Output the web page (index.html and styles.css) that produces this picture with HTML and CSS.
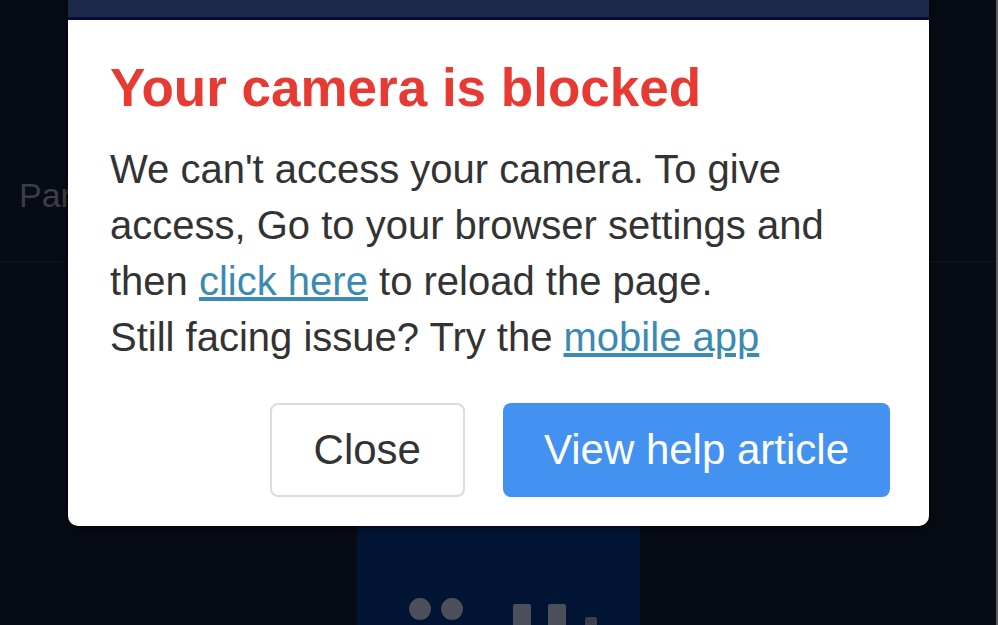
FILE: index.html
```html
<!DOCTYPE html>
<html lang="en">
<head>
  <meta charset="UTF-8" />
  <title>Camera blocked</title>
  <meta name="viewport" content="width=device-width, initial-scale=1.0"/>
  <link rel="stylesheet" href="styles.css">
</head>
<body>
  <!-- 背景：会议界面 -->
  <div class="stage">
    <div class="side-row">
      <span class="side-label">Participants</span>
    </div>
    <div class="tile">
      <svg class="tile-icons" viewBox="0 0 283 100" xmlns="http://www.w3.org/2000/svg">
        <circle cx="63" cy="84" r="11" fill="#4b4f5a"/>
        <circle cx="95" cy="84" r="11" fill="#4b4f5a"/>
        <rect x="156" y="79" width="18" height="30" rx="2" fill="#4b4f5a"/>
        <rect x="191" y="79" width="18" height="30" rx="2" fill="#4b4f5a"/>
        <rect x="228" y="92" width="12" height="20" rx="2" fill="#3a3f4b"/>
      </svg>
    </div>
  </div>

  <!-- 弹窗 -->
  <div class="modal">
    <div class="modal-head"></div>
    <div class="modal-body">
      <h1 class="modal-title">Your camera is blocked</h1>
      <p class="modal-text">
        We can't access your camera. To give access, Go to your browser settings and
        then <a href="#">click here</a> to reload the page.<br>
        Still facing issue? Try the <a href="#">mobile app</a>
      </p>
      <div class="modal-actions">
        <button class="btn btn-close">Close</button>
        <button class="btn btn-primary">View help article</button>
      </div>
    </div>
  </div>
</body>
</html>
```

FILE: styles.css
```css
body {
  margin: 0;
  padding: 0;
  background: #070b14;
  font-family: "Liberation Sans", Arial, sans-serif;
  overflow: hidden;
  height: 625px;
}

/* ======================
   背景
   ====================== */
.stage {
  height: 625px;
  border-right: 2px solid #5a5d63;
  box-sizing: border-box;
  display: flex;
  flex-direction: column;
}
.side-row {
  height: 262px;
  border-bottom: 1px solid #0f1522;
  padding: 176px 0 0 19px;
  box-sizing: border-box;
}
.side-label {
  display: block;
  width: 49px;
  overflow: hidden;
  white-space: nowrap;
  font-size: 34px;
  color: #3b3e46;
}
.tile {
  flex: 1;
  width: 283px;
  margin-left: 357px;
  background: #021433;
  display: flex;
  align-items: flex-end;
}
.tile-icons {
  width: 283px;
  height: 100px;
  display: block;
}

/* ======================
   弹窗
   ====================== */
.modal {
  position: absolute;
  top: 0;
  left: 68px;
  width: 861px;
  height: 526px;
  background: #fff;
  border-radius: 0 0 10px 10px;
  box-shadow: 0 2px 6px rgba(0,0,0,0.6);
  overflow: hidden;
}
.modal-head {
  height: 17px;
  background: #1c294b;
  border-bottom: 3px solid #030b38;
}
.modal-body {
  padding: 0 39px 0 42px;
}
.modal-title {
  margin: 36px 0 21px 0;
  font-size: 53px;
  line-height: 64px;
  font-weight: bold;
  color: #e63a32;
}
.modal-text {
  margin: 0;
  font-size: 40px;
  line-height: 56px;
  color: #333;
}
.modal-text a {
  color: #3b8ab3;
  text-decoration: underline;
}
.modal-actions {
  display: flex;
  justify-content: flex-end;
  gap: 38px;
  margin-top: 38px;
}
.btn {
  height: 94px;
  padding: 0 41px;
  border-radius: 8px;
  font-family: "Liberation Sans", Arial, sans-serif;
  font-size: 42px;
  cursor: pointer;
}
.btn-close {
  padding: 0 42px;
  background: #fff;
  color: #333;
  border: 2px solid #dcdcdc;
}
.btn-primary {
  background: #4392f1;
  color: #fff;
  border: none;
}
```
